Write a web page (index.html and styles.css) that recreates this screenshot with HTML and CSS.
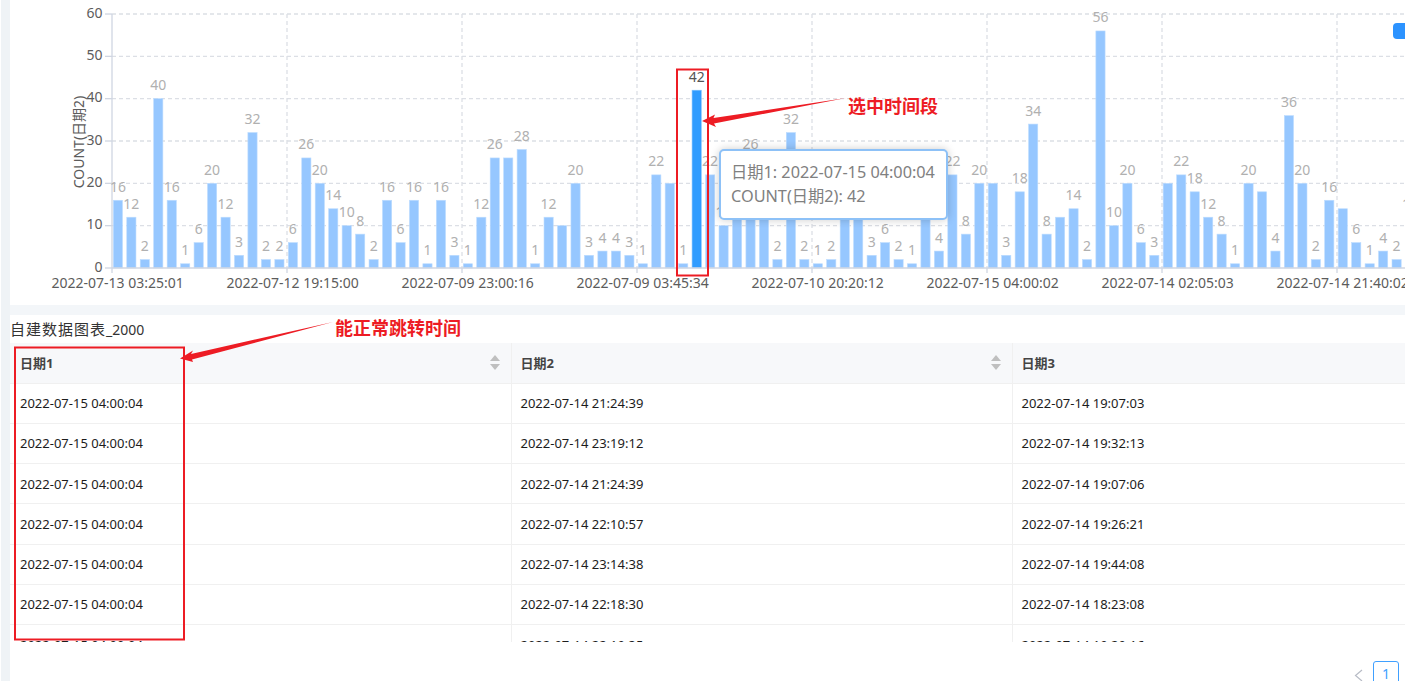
FILE: index.html
```html
<!DOCTYPE html>
<html lang="zh">
<head>
<meta charset="utf-8">
<title>自建数据图表_2000</title>
<link rel="stylesheet" href="styles.css">
</head>
<body>
<div class="page">
  <aside class="strip"></aside>
  <main class="main">
    <section class="chart-panel">
      <svg id="chart" class="chart" viewBox="10 0 1395 305" width="1395" height="305"></svg>
      <div class="legend-swatch"></div>
      <div class="tooltip">
        <div>日期1: 2022-07-15 04:00:04</div>
        <div>COUNT(日期2): 42</div>
      </div>
    </section>
    <section class="table-panel">
      <h2 class="table-title"><span class="title-cjk">自建数据图表</span>_2000</h2>
      <div class="table-clip">
        <table class="data-table">
          <colgroup><col class="col"><col class="col"><col class="col"></colgroup>
          <thead>
            <tr>
              <th><div class="th-inner">日期1<span class="sorter"><i class="up"></i><i class="down"></i></span></div></th>
              <th><div class="th-inner">日期2<span class="sorter"><i class="up"></i><i class="down"></i></span></div></th>
              <th><div class="th-inner">日期3</div></th>
            </tr>
          </thead>
          <tbody>
            <tr><td>2022-07-15 04:00:04</td><td>2022-07-14 21:24:39</td><td>2022-07-14 19:07:03</td></tr>
            <tr><td>2022-07-15 04:00:04</td><td>2022-07-14 23:19:12</td><td>2022-07-14 19:32:13</td></tr>
            <tr><td>2022-07-15 04:00:04</td><td>2022-07-14 21:24:39</td><td>2022-07-14 19:07:06</td></tr>
            <tr><td>2022-07-15 04:00:04</td><td>2022-07-14 22:10:57</td><td>2022-07-14 19:26:21</td></tr>
            <tr><td>2022-07-15 04:00:04</td><td>2022-07-14 23:14:38</td><td>2022-07-14 19:44:08</td></tr>
            <tr><td>2022-07-15 04:00:04</td><td>2022-07-14 22:18:30</td><td>2022-07-14 18:23:08</td></tr>
            <tr><td>2022-07-15 04:00:04</td><td>2022-07-14 22:19:35</td><td>2022-07-14 19:20:16</td></tr>
          </tbody>
        </table>
      </div>
      <nav class="pager">
        <svg class="pager-prev" width="10" height="14" viewBox="0 0 10 14"><polyline points="8,1 1.5,6.5 8,12"></polyline></svg>
        <span class="pager-item">1</span>
      </nav>
    </section>
  </main>
</div>
<svg class="annotations" width="1405" height="681" viewBox="0 0 1405 681">
  <rect class="frame" x="677" y="69.5" width="31" height="206"></rect>
  <rect class="frame" x="15" y="347.5" width="169" height="292"></rect>
  <polygon class="arrow" points="702,121 715,114.500 713.500,118 846,98 714,123.500 716,127"></polygon>
  <polygon class="arrow" points="180,358.500 193,350.500 191,354 333,322 192,359.500 193,362"></polygon>
  <text class="note" x="848" y="112.500">选中时间段</text>
  <text class="note" x="335" y="334.500">能正常跳转时间</text>
</svg>
<script src="script.js"></script>
</body>
</html>
```
FILE: styles.css
```css
* { box-sizing: border-box; }
html, body {
  margin: 0;
  height: 681px;
  overflow: hidden;
  background: #fff;
  font-family: "Noto Sans", "Noto Sans CJK SC", sans-serif;
}
.page { display: flex; width: 1405px; height: 681px; position: relative; }
.strip { flex: 0 0 9px; margin-left: 1px; background: #eff3f6; }
.main {
  flex: 1;
  min-width: 0;
  overflow: hidden;
  display: flex;
  flex-direction: column;
  gap: 10px;
  background: #f3f6f9;
}
.chart-panel { position: relative; height: 305px; flex: none; background: #fff; }
.chart { display: block; }
.chart text { font-family: "Noto Sans", "Noto Sans CJK SC", sans-serif; font-size: 14px; }
.grid { stroke: #dcdfe5; stroke-width: 1.3; stroke-dasharray: 4 3; fill: none; }
.axis { stroke: #d0d6e2; stroke-width: 1.3; fill: none; }
.bar { fill: #94c6ff; stroke: #bddcff; stroke-width: .6; fill-opacity: .98; }
.bar.on { fill: #2c9aff; stroke: #7fc1ff; }
.lbl { fill: #b0b0b0; text-anchor: middle; }
.lbl.on { fill: #555; }
.tick { fill: #5c5c5c; }
.tick.y { text-anchor: end; }
.tick.x { text-anchor: middle; }
.yname { fill: #5c5c5c; text-anchor: middle; }
.legend-swatch {
  position: absolute;
  left: 1383px;
  top: 22.500px;
  width: 30px;
  height: 16px;
  border-radius: 4px;
  background: #2c93ff;
}
.tooltip {
  position: absolute;
  left: 709px;
  top: 149px;
  width: 229px;
  height: 71px;
  padding: 9px 0 0 10px;
  background: #fff;
  border: 2px solid #8dc1f7;
  border-radius: 5px;
  box-shadow: 0 0 8px rgba(0, 0, 0, .2);
  color: #808080;
  font-size: 16.250px;
  line-height: 24px;
  white-space: nowrap;
}
.table-panel { flex: 1; min-height: 0; background: #fff; }
.table-title {
  margin: 0;
  height: 28px;
  line-height: 28px;
  font-size: 14px;
  font-weight: 400;
  color: #333;
}
.title-cjk { font-size: 15px; letter-spacing: 1px; }
.table-clip { height: 299px; overflow: hidden; }
.data-table {
  width: 1503px;
  table-layout: fixed;
  border-collapse: collapse;
  font-size: 13px;
  color: #1c1c1c;
}
.col { width: 501px; }
.data-table th {
  height: 40px;
  padding: 0;
  background: #f7f8fa;
  border-right: 1px solid #f0f0f0;
  border-bottom: 1px solid #f0f0f0;
  text-align: left;
  font-weight: 700;
  color: #444;
}
.th-inner { display: flex; align-items: center; justify-content: space-between; padding: 0 10px 1px 10px; }
.data-table th + th .th-inner { padding-left: 9px; }
.sorter { display: flex; flex-direction: column; gap: 3px; margin-right: 1px; }
.sorter i { display: block; width: 0; height: 0; border-left: 5px solid transparent; border-right: 5px solid transparent; }
.sorter .up { border-bottom: 6px solid #bfbfbf; }
.sorter .down { border-top: 6px solid #bfbfbf; }
.data-table td {
  height: 40.250px;
  padding: 0 10px;
  border-right: 1px solid #f0f0f0;
  border-bottom: 1px solid #f0f0f0;
  white-space: nowrap;
}
.data-table td + td { padding-left: 9px; }
.pager { display: flex; justify-content: flex-end; align-items: flex-start; gap: 9px; padding: 19px 6px 0 0; }
.pager-prev { margin-top: 8px; }
.pager-prev polyline { fill: none; stroke: #b8bcc6; stroke-width: 1.2; }
.pager-item {
  width: 26px;
  height: 28px;
  border: 1px solid #40a0ff;
  border-radius: 3px;
  color: #40a0ff;
  font-size: 14px;
  line-height: 24px;
  text-align: center;
}
.annotations { position: absolute; left: 0; top: 0; pointer-events: none; }
.frame { fill: none; stroke: #ed1c24; stroke-width: 2; }
.arrow { fill: #ed1c24; }
.note {
  fill: #ed1c24;
  font-family: "Noto Sans CJK SC", sans-serif;
  font-size: 18px;
  font-weight: 700;
}
```
FILE: script.js
```js
var NS = "http://www.w3.org/2000/svg";
var svg = document.getElementById("chart");
function el(name, attrs, text) {
  var n = document.createElementNS(NS, name);
  for (var k in attrs) n.setAttribute(k, attrs[k]);
  if (text !== undefined) n.textContent = text;
  svg.appendChild(n);
}
var Y0 = 268, UNIT = 4.233, STEP = 13.46, X0 = 112;
var values = [16,12,2,40,16,1,6,20,12,3,32,2,2,6,26,20,14,10,8,2,16,6,16,1,16,3,1,
  12,26,26,28,1,12,10,20,3,4,4,3,1,22,20,1,42,22,10,20,26,20,2,32,2,1,2,20,20,3,6,2,1,
  20,4,22,8,20,20,3,18,34,8,12,14,2,56,10,20,6,3,20,22,18,12,8,1,20,18,4,36,20,2,16,14,6,1,4,2,12];
var noLabel = {29:1,33:1,41:1,46:1,48:1,54:1,55:1,60:1,65:1,70:1,78:1,85:1,91:1};
var SELECTED = 43;
var xNames = ["2022-07-13 03:25:01","2022-07-12 19:15:00","2022-07-09 23:00:16","2022-07-09 03:45:34",
  "2022-07-10 20:20:12","2022-07-15 04:00:02","2022-07-14 02:05:03","2022-07-14 21:40:02"];
var i;
for (i = 1; i <= 6; i++) {
  var gy = Y0 - i * 10 * UNIT;
  el("line", {"class":"grid", x1:X0, x2:1405, y1:gy, y2:gy});
  el("line", {"class":"axis", x1:105, x2:X0, y1:gy, y2:gy});
}
el("line", {"class":"axis", x1:105, x2:X0, y1:Y0, y2:Y0});
for (i = 0; i < 8; i++) {
  var gx = X0 + i * 175;
  el("line", {"class": i ? "grid" : "axis", x1:gx, x2:gx, y1:14, y2:Y0});
  el("line", {"class":"axis", x1:gx, x2:gx, y1:Y0, y2:273});
  el("text", {"class":"tick x", x:gx + 5.6, y:288}, xNames[i]);
}
values.forEach(function (v, idx) {
  var x = 113.3 + idx * STEP, h = v * UNIT, on = idx === SELECTED;
  el("rect", {"class": on ? "bar on" : "bar", x:x, y:Y0 - h, width:9.2, height:h});
});
el("line", {"class":"axis", x1:X0, x2:1405, y1:Y0, y2:Y0});
values.forEach(function (v, idx) {
  if (noLabel[idx]) return;
  var x = 113.3 + idx * STEP + 4.6, on = idx === SELECTED;
  el("text", {"class": on ? "lbl on" : "lbl", x:x, y:Y0 - v * UNIT - 8.5}, v);
});
for (i = 0; i <= 6; i++) {
  el("text", {"class":"tick y", x:102.500, y:Y0 - i * 10 * UNIT + 3.500}, i * 10);
}
el("text", {"class":"yname", x:0, y:0, transform:"translate(84 142) rotate(-90)"}, "COUNT(日期2)");
```
